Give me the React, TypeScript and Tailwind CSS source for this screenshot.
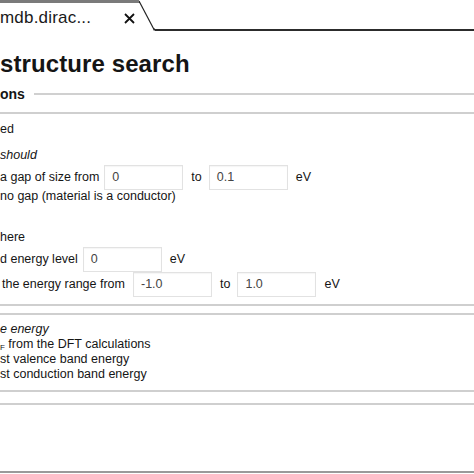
import React from "react";

function Field({ value }: { value: string }) {
  return (
    <div className="flex h-[25px] w-[79px] items-center border border-[#e2e2e2] bg-white pl-[7px] text-[12.5px] text-[#444] shadow-[inset_0_1px_1px_rgba(0,0,0,0.04)]">
      {value}
    </div>
  );
}

function Rule({ className = "" }: { className?: string }) {
  return <div className={`h-[2px] w-full bg-[#cfcfcf] ${className}`} />;
}

export default function App() {
  return (
    <div
      className="flex h-[474px] w-[474px] flex-col overflow-hidden bg-white text-[#151515]"
      style={{ fontFamily: '"Liberation Sans", Arial, sans-serif' }}
    >
      {/* browser tab strip */}
      <div className="flex h-[31px] shrink-0">
        <div className="relative flex w-[139px] items-center border-t-[3px] border-[#7a7a7a]">
          <span className="mt-[2px] text-[17px] tracking-[0.2px] text-[#1a1a1a]">mdb.dirac...</span>
          <svg className="absolute left-[124px] top-[10px]" width="11" height="11" viewBox="0 0 11 11">
            <path d="M1 1 L10 10 M10 1 L1 10" stroke="#111" strokeWidth="1.8" />
          </svg>
        </div>
        <svg width="16" height="31" viewBox="0 0 16 31" className="shrink-0">
          <path d="M0 1 L15 29.5" stroke="#222" strokeWidth="1.2" fill="none" />
          <path d="M14.5 29.5 H16" stroke="#222" strokeWidth="2" />
        </svg>
        <div className="flex-1 border-b-2 border-[#2c2c2c]" />
      </div>

      {/* heading */}
      <h1 className="mt-[21px] h-[24px] shrink-0 text-[24px] font-bold leading-[24px] tracking-[0.1px]">
        structure search
      </h1>

      {/* legend */}
      <div className="flex h-[36px] shrink-0 items-center">
        <span className="text-[14px] font-bold leading-none">ons</span>
        <div className="ml-[9px] h-[2px] flex-1 bg-[#d0d0d0]" />
      </div>
      <Rule />

      <div className="flex flex-col text-[12.5px]">
        <div className="flex h-[30px] items-center">ed</div>
        <div className="mt-[1px] flex h-[20px] items-center italic">should</div>
        <div className="flex h-[25px] items-center">
          <span>a gap of size from</span>
          <div className="ml-[5px]">
            <Field value="0" />
          </div>
          <span className="ml-[8px]">to</span>
          <div className="ml-[7px]">
            <Field value="0.1" />
          </div>
          <span className="ml-[8px]">eV</span>
        </div>
        <div className="flex h-[12px] items-center">no gap (material is a conductor)</div>

        <div className="mt-[26px] flex h-[19px] items-center">here</div>
        <div className="flex h-[25px] items-center">
          <span>d energy level</span>
          <div className="ml-[5px]">
            <Field value="0" />
          </div>
          <span className="ml-[8px]">eV</span>
        </div>
        <div className="flex h-[25px] items-center">
          <span className="ml-[2px]">the energy range from</span>
          <div className="ml-[8px]">
            <Field value="-1.0" />
          </div>
          <span className="ml-[8px]">to</span>
          <div className="ml-[7px]">
            <Field value="1.0" />
          </div>
          <span className="ml-[8px]">eV</span>
        </div>
      </div>

      <Rule className="mt-[7px]" />
      <Rule className="mt-[7px]" />

      <div className="mt-[7px] flex flex-col text-[12.5px] leading-[15px]">
        <div className="italic">e energy</div>
        <div>
          <sub className="text-[8px]">F</sub> from the DFT calculations
        </div>
        <div>st valence band energy</div>
        <div>st conduction band energy</div>
      </div>

      <Rule className="mt-[8px]" />
      <Rule className="mt-[11px]" />
      <div className="mt-[66px] h-[2px] w-full bg-[#9a9a9a]" />
    </div>
  );
}
